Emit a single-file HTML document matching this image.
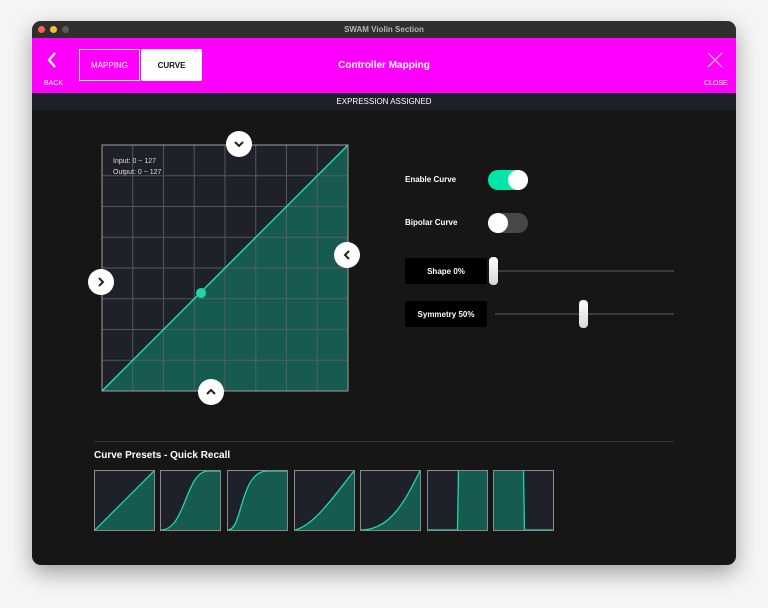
<!DOCTYPE html>
<html><head><style>
*{margin:0;padding:0;box-sizing:border-box}
body{width:768px;height:608px;background:#f5f5f5;font-family:"Liberation Sans",sans-serif;position:relative;overflow:hidden}
.win{position:absolute;left:32px;top:21px;width:704px;height:544px;background:#161616;border-radius:9px;overflow:hidden;box-shadow:0 8px 22px rgba(0,0,0,.35)}
.tb{position:absolute;left:0;top:0;width:704px;height:17px;background:#2f2f2f;color:#b5b5b5;font-size:8px;font-weight:bold;text-align:center;line-height:17px}
.dot{position:absolute;top:5px;width:7px;height:7px;border-radius:50%}
.hd{position:absolute;left:0;top:17px;width:704px;height:55px;background:#ff00ff;color:#fff}
.sb{position:absolute;left:0;top:72px;width:704px;height:17px;background:#1d2028;color:#fff;font-size:8px;text-align:center;line-height:17px}
.abs{position:absolute}
.circ{position:absolute;width:26px;height:26px;border-radius:50%;background:#fff;display:flex;align-items:center;justify-content:center}
.lbl{position:absolute;color:#fff;font-size:8px;font-weight:bold}
.box{position:absolute;background:#000;color:#fff;font-size:8px;font-weight:bold;display:flex;align-items:center;justify-content:center;border-radius:2px}
.track{position:absolute;height:2px;background:#3a3a3a}
.thumb{position:absolute;width:9px;height:28px;border-radius:4px;background:linear-gradient(#fff,#d8d8d8)}
.pr{position:absolute;top:449px;width:61px;height:61px;border:1px solid #8a8a8a;background:#1e212a}
</style></head><body>
<div class="win">
<div class="tb">SWAM Violin Section
<div class="dot" style="left:6px;background:#fe5f57"></div>
<div class="dot" style="left:18px;background:#febc2e"></div>
<div class="dot" style="left:30px;background:#5a5a5a"></div>
</div>
<div class="hd">
<svg class="abs" style="left:14px;top:13px" width="12" height="18"><path d="M9 2 L3 9 L9 16" stroke="#fff" stroke-width="2.2" fill="none"/></svg>
<div class="abs" style="left:12px;top:42px;font-size:7px">BACK</div>
<div class="abs" style="left:47px;top:11px;width:61px;height:32px;border:1px solid #fff;font-size:8px;display:flex;align-items:center;justify-content:center">MAPPING</div>
<div class="abs" style="left:109px;top:11px;width:61px;height:32px;background:#fff;color:#111;font-weight:bold;font-size:8px;display:flex;align-items:center;justify-content:center;border-radius:2px">CURVE</div>
<div class="abs" style="left:0;width:704px;top:22px;text-align:center;font-size:10px;font-weight:bold">Controller Mapping</div>
<svg class="abs" style="left:675px;top:14px" width="16" height="16"><path d="M1 1L15 15M15 1L1 15" stroke="#fff" stroke-width="1" opacity=".85"/></svg>
<div class="abs" style="left:672px;top:42px;font-size:7px">CLOSE</div>
</div>
<div class="sb">EXPRESSION ASSIGNED</div>

<svg class="abs" style="left:69px;top:123px" width="249" height="249">
<rect x="1" y="1" width="246" height="246" fill="#1e212a"/>
<polygon points="1,247 247,1 247,247" fill="#165a50"/>
<g stroke="#5c6068" stroke-width="1" opacity=".85">
<path d="M31.75 1V247M62.5 1V247M93.25 1V247M124 1V247M154.75 1V247M185.5 1V247M216.25 1V247M1 31.75H247M1 62.5H247M1 93.25H247M1 124H247M1 154.75H247M1 185.5H247M1 216.25H247"/>
</g>
<line x1="1" y1="247" x2="247" y2="1" stroke="#22d9a8" stroke-width="1.5"/>
<rect x="1" y="1" width="246" height="246" fill="none" stroke="#a0a0a0" stroke-width="1"/>
<circle cx="100" cy="149" r="5" fill="#1fd8a6"/>
<text x="12" y="19" font-size="7" fill="#ddd" font-family="Liberation Sans">Input: 0 ~ 127</text>
<text x="12" y="30" font-size="7" fill="#ddd" font-family="Liberation Sans">Output: 0 ~ 127</text>
</svg>
<div class="circ" style="left:194px;top:110px"><svg width="10" height="8"><path d="M1 2L5 6L9 2" stroke="#222" stroke-width="2" fill="none"/></svg></div>
<div class="circ" style="left:166px;top:358px"><svg width="10" height="8"><path d="M1 6L5 2L9 6" stroke="#222" stroke-width="2" fill="none"/></svg></div>
<div class="circ" style="left:56px;top:248px"><svg width="8" height="10"><path d="M2 1L6 5L2 9" stroke="#222" stroke-width="2" fill="none"/></svg></div>
<div class="circ" style="left:302px;top:221px"><svg width="8" height="10"><path d="M6 1L2 5L6 9" stroke="#222" stroke-width="2" fill="none"/></svg></div>

<div class="lbl" style="left:373px;top:154px">Enable Curve</div>
<div class="abs" style="left:456px;top:149px;width:40px;height:20px;border-radius:10px;background:#00e5a8"></div>
<div class="abs" style="left:476px;top:149px;width:20px;height:20px;border-radius:50%;background:#fff"></div>
<div class="lbl" style="left:373px;top:197px">Bipolar Curve</div>
<div class="abs" style="left:456px;top:192px;width:40px;height:20px;border-radius:10px;background:#484848"></div>
<div class="abs" style="left:456px;top:192px;width:20px;height:20px;border-radius:50%;background:#fff"></div>

<div class="box" style="left:373px;top:237px;width:82px;height:26px">Shape 0%</div>
<div class="track" style="left:460px;top:249px;width:182px"></div>
<div class="thumb" style="left:457px;top:236px"></div>
<div class="box" style="left:373px;top:280px;width:82px;height:26px">Symmetry 50%</div>
<div class="track" style="left:463px;top:292px;width:179px"></div>
<div class="thumb" style="left:547px;top:279px"></div>

<div class="abs" style="left:62px;top:420px;width:580px;height:1px;background:#333"></div>
<div class="lbl" style="left:62px;top:429px;font-size:10px">Curve Presets - Quick Recall</div>

<svg class="pr" style="left:62px" viewBox="0 0 60 60" preserveAspectRatio="none"><path d="M0 60L60 0V60Z" fill="#165a50"/><path d="M0 60L60 0" stroke="#22d9a8" stroke-width="1.3" fill="none"/></svg>
<svg class="pr" style="left:128px" viewBox="0 0 60 60" preserveAspectRatio="none"><path d="M0 60C25 60 25 0 48 0H60V60Z" fill="#165a50"/><path d="M0 60C25 60 25 0 48 0H60" stroke="#22d9a8" stroke-width="1.3" fill="none"/></svg>
<svg class="pr" style="left:195px" viewBox="0 0 60 60" preserveAspectRatio="none"><path d="M0 60C15 60 12 0 40 0H60V60Z" fill="#165a50"/><path d="M0 60C15 60 12 0 40 0H60" stroke="#22d9a8" stroke-width="1.3" fill="none"/></svg>
<svg class="pr" style="left:262px" viewBox="0 0 60 60" preserveAspectRatio="none"><path d="M0 60C20 55 40 25 60 0V60Z" fill="#165a50"/><path d="M0 60C20 55 40 25 60 0" stroke="#22d9a8" stroke-width="1.3" fill="none"/></svg>
<svg class="pr" style="left:328px" viewBox="0 0 60 60" preserveAspectRatio="none"><path d="M0 60C30 60 45 30 60 0V60Z" fill="#165a50"/><path d="M0 60C30 60 45 30 60 0" stroke="#22d9a8" stroke-width="1.3" fill="none"/></svg>
<svg class="pr" style="left:395px" viewBox="0 0 60 60" preserveAspectRatio="none"><path d="M30 60L31 0H60V60Z" fill="#165a50"/><path d="M0 60H30L31 0" stroke="#22d9a8" stroke-width="1.3" fill="none"/></svg>
<svg class="pr" style="left:461px" viewBox="0 0 60 60" preserveAspectRatio="none"><path d="M0 0H30L31 60H0Z" fill="#165a50"/><path d="M30 0L31 60H60" stroke="#22d9a8" stroke-width="1.3" fill="none"/></svg>
</div>
</body></html>
